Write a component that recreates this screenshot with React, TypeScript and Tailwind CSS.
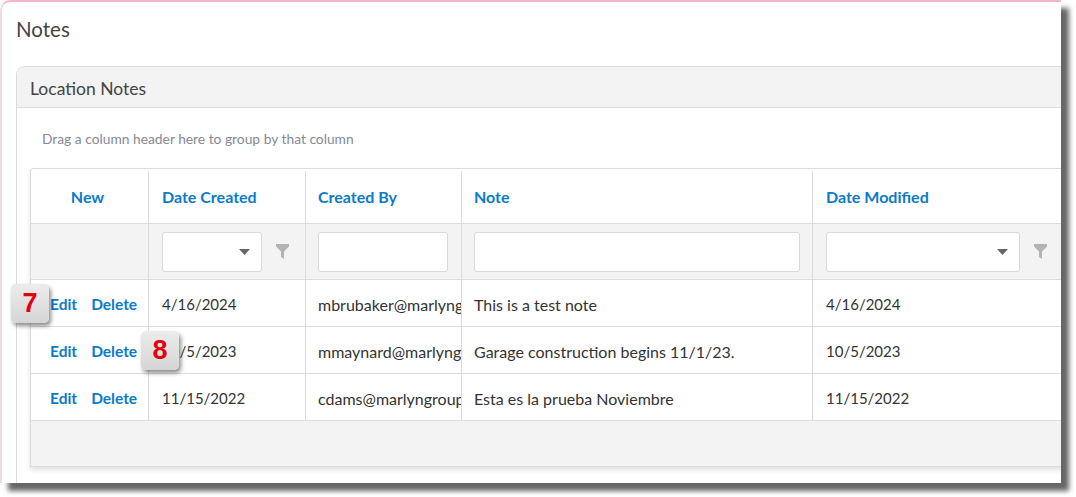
import React from "react"

const cols = "grid grid-cols-[117px_157px_156px_351px_280px]"

const rows = [
  { created: "4/16/2024", by: "mbrubaker@marlyngroup.com", note: "This is a test note", modified: "4/16/2024" },
  { created: "10/5/2023", by: "mmaynard@marlyngroup.com", note: "Garage construction begins 11/1/23.", modified: "10/5/2023" },
  { created: "11/15/2022", by: "cdams@marlyngroup.com", note: "Esta es la prueba Noviembre", modified: "11/15/2022" },
]

function Funnel() {
  return (
    <svg width="13" height="15" viewBox="0 0 13 15" className="shrink-0">
      <path d="M0 0h13v2.5L8 7.5V15L5 13V7.5L0 2.5z" fill="#b3b3b3" />
    </svg>
  )
}

function DateFilter({ width }: { width: string }) {
  return (
    <div className="flex items-center gap-[14px]">
      <div className={`${width} flex h-[40px] items-center justify-end rounded-[3px] border border-[#d9d9d9] bg-white pr-[11px]`}>
        <svg width="11" height="6" viewBox="0 0 11 6">
          <path d="M0 0h11L5.5 6z" fill="#666" />
        </svg>
      </div>
      <Funnel />
    </div>
  )
}

function Callout({ n, className }: { n: string; className: string }) {
  return (
    <div
      className={`absolute flex h-[39px] w-[38px] items-center justify-center rounded-[5px] bg-gradient-to-b from-[#ececec] to-[#d5d5d5] text-[27px] font-bold text-[#e3000f] shadow-[2px_3px_4px_rgba(0,0,0,0.45)] ${className}`}
      style={{ fontFamily: '"Liberation Sans", Arial, sans-serif' }}
    >
      {n}
    </div>
  )
}

export default function App() {
  return (
    <div className="h-[497px] w-[1076px] bg-white" style={{ fontFamily: 'Lato, "Open Sans", sans-serif' }}>
      <div className="relative h-[483px] w-[1061px] overflow-hidden rounded-tl-[10px] border-l-[2px] border-t-[2px] border-l-[#eadde2] border-t-[#f4b7c9] bg-white shadow-[8px_8px_5px_rgba(0,0,0,0.6)]">
        <div className="px-[14px] pt-[14px] text-[20.5px] leading-[26px] text-[#444]">Notes</div>

        {/* Location Notes panel */}
        <div className="ml-[14px] mt-[24px] h-[460px] w-[1080px] rounded-tl-[9px] border-l border-t border-[#dcdcdc]">
          <div className="flex h-[41px] items-center rounded-tl-[9px] border-b border-[#dcdcdc] bg-[#f3f3f3] px-[13px] pt-[4px] text-[17.5px] text-[#444]">
            Location Notes
          </div>

          <div className="pl-[13px] pt-[22px]">
            <div className="pl-[12px] text-[13.8px] leading-[18px] text-[#858996]">
              Drag a column header here to group by that column
            </div>

            {/* grid */}
            <div className="mt-[20px] w-[1100px] rounded-tl-[4px] border-b border-l border-t border-[#dcdcdc] shadow-[0_3px_5px_rgba(0,0,0,0.12)]">
              <div className={`${cols} h-[55px] border-b border-[#dcdcdc] pt-[2px] text-[16px] font-bold text-[#0b7bc7]`}>
                <div className="flex items-center justify-center pr-[4px]">New</div>
                <div className="flex items-center border-l border-[#dcdcdc] pl-[13px]">Date Created</div>
                <div className="flex items-center border-l border-[#dcdcdc] pl-[12px]">Created By</div>
                <div className="flex items-center border-l border-[#dcdcdc] pl-[12px]">Note</div>
                <div className="flex items-center border-l border-[#dcdcdc] pl-[13px]">Date Modified</div>
              </div>

              <div className={`${cols} h-[56px] border-b border-[#dcdcdc] bg-[#f3f3f3]`}>
                <div />
                <div className="flex items-center border-l border-[#dcdcdc] pl-[13px]">
                  <DateFilter width="w-[100px]" />
                </div>
                <div className="flex items-center border-l border-[#dcdcdc] pl-[12px]">
                  <div className="h-[40px] w-[130px] rounded-[3px] border border-[#d9d9d9] bg-white" />
                </div>
                <div className="flex items-center border-l border-[#dcdcdc] pl-[12px]">
                  <div className="h-[40px] w-[326px] rounded-[3px] border border-[#d9d9d9] bg-white" />
                </div>
                <div className="flex items-center border-l border-[#dcdcdc] pl-[13px]">
                  <DateFilter width="w-[194px]" />
                </div>
              </div>

              {rows.map((r) => (
                <div key={r.created} className={`${cols} h-[47px] border-b border-[#dcdcdc] text-[16px] text-[#333]`}>
                  <div className="flex items-center gap-[14px] pl-[19px] pt-[3px] text-[15.5px] font-bold text-[#0b7bc7]">
                    <span>Edit</span>
                    <span>Delete</span>
                  </div>
                  <div className="flex items-center border-l border-[#dcdcdc] pl-[13px] pt-[3px] text-[15px]">{r.created}</div>
                  <div className="flex items-center overflow-hidden whitespace-nowrap border-l border-[#dcdcdc] pl-[12px] pt-[3px]">{r.by}</div>
                  <div className="flex items-center overflow-hidden whitespace-nowrap border-l border-[#dcdcdc] pl-[12px] pt-[3px]">{r.note}</div>
                  <div className="flex items-center border-l border-[#dcdcdc] pl-[13px] pt-[3px] text-[15px]">{r.modified}</div>
                </div>
              ))}

              <div className="h-[45px] bg-[#f3f3f3]" />
            </div>
          </div>
        </div>

        <Callout n="7" className="left-[9px] top-[282px]" />
        <Callout n="8" className="left-[139px] top-[329px]" />
      </div>
    </div>
  )
}
